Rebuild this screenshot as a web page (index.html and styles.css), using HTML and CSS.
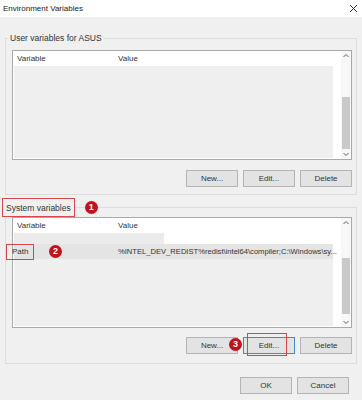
FILE: index.html
```html
<!DOCTYPE html>
<html lang="en">
<head>
    <meta charset="UTF-8">
    <meta name="viewport" content="width=device-width, initial-scale=1.0">
    <title>Environment Variables</title>
    <link rel="stylesheet" href="styles.css">
</head>
<body>
    <div class="window">
        <div class="titlebar">
            <span class="title">Environment Variables</span>
            <svg class="close" width="9" height="9" viewBox="0 0 9 9"><path d="M1 1L8 8M8 1L1 8" stroke="#333" stroke-width="1"/></svg>
        </div>
        <div class="client">
            <fieldset class="group user">
                <legend>User variables for ASUS</legend>
                <div class="listbox">
                    <div class="list-main">
                        <div class="list-head"><span class="col-var">Variable</span><span class="col-val">Value</span></div>
                        <div class="list-body"></div>
                    </div>
                    <div class="scrollbar">
                        <svg class="arrow" width="10" height="10" viewBox="0 0 10 10"><path d="M2.5 6L5 3.5L7.5 6" fill="none" stroke="#606060"/></svg>
                        <div class="track"><div class="thumb user-thumb"></div></div>
                        <svg class="arrow" width="10" height="10" viewBox="0 0 10 10"><path d="M2.5 4L5 6.5L7.5 4" fill="none" stroke="#606060"/></svg>
                    </div>
                </div>
                <div class="btn-row">
                    <button>New...</button>
                    <button>Edit...</button>
                    <button>Delete</button>
                </div>
            </fieldset>

            <fieldset class="group system">
                <legend class="marked">System variables<span class="badge badge-1">1</span></legend>
                <div class="listbox sys-list">
                    <div class="list-main">
                        <div class="list-head"><span class="col-var">Variable</span><span class="col-val">Value</span></div>
                        <div class="list-body">
                            <div class="row row-blank"></div>
                            <div class="row row-path">
                                <span class="col-var"><span class="marked-cell">Path</span></span>
                                <span class="col-val path-val">%INTEL_DEV_REDIST%redist\intel64\compiler;C:\Windows\sy...</span>
                                <span class="badge badge-2">2</span>
                            </div>
                        </div>
                    </div>
                    <div class="scrollbar">
                        <svg class="arrow" width="10" height="10" viewBox="0 0 10 10"><path d="M2.5 6L5 3.5L7.5 6" fill="none" stroke="#606060"/></svg>
                        <div class="track"><div class="thumb sys-thumb"></div></div>
                        <svg class="arrow" width="10" height="10" viewBox="0 0 10 10"><path d="M2.5 4L5 6.5L7.5 4" fill="none" stroke="#606060"/></svg>
                    </div>
                </div>
                <div class="btn-row">
                    <button>New...</button>
                    <div class="btn-wrap">
                        <span class="badge badge-3">3</span>
                        <button class="focused">Edit...</button>
                        <span class="mark-box"></span>
                    </div>
                    <button>Delete</button>
                </div>
            </fieldset>

            <div class="dialog-btns">
                <button>OK</button>
                <button>Cancel</button>
            </div>
        </div>
    </div>
</body>
</html>
```

FILE: styles.css
```css
body {
    margin: 0;
    font-family: "Liberation Sans", Arial, sans-serif;
    font-size: 8px;
    color: #333;
    background-color: #f0f0f0;
}
.window {
    width: 362px;
    height: 400px;
    background-color: #f0f0f0;
}
.titlebar {
    height: 17px;
    background-color: #fff;
    display: flex;
    align-items: center;
    justify-content: space-between;
    padding: 0 4px 0 3px;
}
.title {
    font-size: 8px;
    color: #222;
}
.client {
    padding: 0 5px 0 5px;
}
.group {
    margin: 0;
    min-width: 0;
    border: 1px solid #dcdcdc;
    padding: 7px 4px 7px 6px;
}
.group legend {
    padding: 0 2px;
    margin-left: -4px;
    line-height: 10px;
    font-size: 8.5px;
}
.user {
    margin-top: 16px;
}
.system {
    margin-top: 3px;
    padding-top: 0;
    padding-bottom: 9px;
}
.group legend.marked {
    position: relative;
    border: 1.5px solid #d9454d;
    padding: 3.5px 3px;
    margin-left: -10px;
    line-height: 10px;
}
.listbox {
    height: 108px;
    border: 1px solid #a9a9a9;
    background-color: #fff;
    display: flex;
}
.sys-list {
    height: 109px;
}
.list-main {
    flex: 1;
    min-width: 0;
    display: flex;
    flex-direction: column;
    padding: 0 8px 1px 1px;
}
.list-head {
    height: 15px;
    display: flex;
    align-items: center;
    background-color: #fff;
}
.col-var {
    width: 99px;
    padding-left: 3px;
    flex-shrink: 0;
}
.col-val {
    flex: 1;
    min-width: 0;
    padding-left: 2px;
    white-space: nowrap;
}
.path-val {
    font-size: 7.6px;
}
.list-body {
    flex: 1;
    background-color: #efefef;
}
.sys-list .list-body {
    background: linear-gradient(#fff, #fff) 0 0 / 100% 11px no-repeat, #efefef;
}
.row {
    display: flex;
    align-items: center;
    position: relative;
}
.row-blank {
    height: 11px;
    width: 150px;
    background-color: #ebebeb;
}
.row-path {
    height: 15px;
    background-color: #e4e4e4;
}
.marked-cell {
    display: inline-block;
    border: 1.5px solid #d9454d;
    padding: 2px 5px;
    margin-left: -11px;
    line-height: 10px;
}
.scrollbar {
    width: 10px;
    flex-shrink: 0;
    display: flex;
    flex-direction: column;
    background-color: #f7f7f7;
}
.arrow {
    display: block;
    flex-shrink: 0;
}
.track {
    flex: 1;
    display: flex;
    flex-direction: column;
}
.thumb {
    background-color: #c9c9c9;
    margin-left: 1px;
    margin-right: 1px;
}
.user-thumb {
    margin-top: 36px;
    height: 52px;
}
.sys-thumb {
    margin-top: 30px;
    height: 56px;
}
.btn-row {
    margin-top: 10px;
    display: flex;
    justify-content: flex-end;
    gap: 5px;
}
.system .btn-row {
    margin-top: 9px;
}
button {
    font-family: "Liberation Sans", Arial, sans-serif;
    font-size: 8px;
    color: #333;
    width: 52px;
    height: 17px;
    padding: 0;
    border: 1px solid #b4b4b4;
    background-color: #e3e3e3;
}
button.focused {
    border-color: #3c8bd9;
}
.btn-wrap {
    position: relative;
    display: flex;
}
.mark-box {
    position: absolute;
    left: 4px;
    top: -4px;
    width: 38px;
    height: 21px;
    border: 1.5px solid #d9454d;
}
.badge {
    position: absolute;
    width: 13px;
    height: 13px;
    border-radius: 50%;
    background-color: #c0141c;
    color: #fff;
    font-weight: bold;
    font-size: 9px;
    line-height: 13px;
    text-align: center;
}
.badge-1 {
    left: calc(100% + 11px);
    top: 2px;
}
.badge-2 {
    left: 35px;
    top: 1px;
}
.badge-3 {
    left: -14px;
    top: 1px;
}
.dialog-btns {
    margin-top: 13px;
    display: flex;
    justify-content: flex-end;
    gap: 5px;
    padding-right: 8px;
}
```
